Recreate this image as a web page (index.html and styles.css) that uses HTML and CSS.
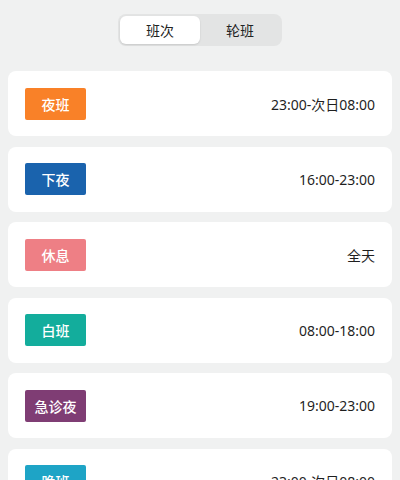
FILE: index.html
```html
<!DOCTYPE html>
<html lang="zh-CN">
<head>
    <meta charset="UTF-8">
    <meta name="viewport" content="width=device-width, initial-scale=1.0">
    <title>班次</title>
    <link rel="stylesheet" href="styles.css">
</head>
<body>
    <div class="page">
        <div class="tabs">
            <div class="tab active">班次</div>
            <div class="tab">轮班</div>
        </div>

        <div class="shift-list">
            <div class="shift-item">
                <span class="tag tag-orange">夜班</span>
                <span class="shift-time">23:00-次日08:00</span>
            </div>
            <div class="shift-item">
                <span class="tag tag-blue">下夜</span>
                <span class="shift-time">16:00-23:00</span>
            </div>
            <div class="shift-item">
                <span class="tag tag-pink">休息</span>
                <span class="shift-time">全天</span>
            </div>
            <div class="shift-item">
                <span class="tag tag-teal">白班</span>
                <span class="shift-time">08:00-18:00</span>
            </div>
            <div class="shift-item">
                <span class="tag tag-purple">急诊夜</span>
                <span class="shift-time">19:00-23:00</span>
            </div>
            <div class="shift-item">
                <span class="tag tag-cyan">晚班</span>
                <span class="shift-time">23:00-次日08:00</span>
            </div>
        </div>
    </div>
</body>
</html>
```

FILE: styles.css
```css
:root {
    --bg: #f0f1f1;
    --card: #ffffff;
    --text: #1f1f1f;
    --tab-bg: #e3e4e4;
}

* {
    margin: 0;
    padding: 0;
    box-sizing: border-box;
    font-family: "Noto Sans", "Noto Sans CJK SC", sans-serif;
}

body {
    background-color: var(--bg);
    color: var(--text);
    overflow: hidden;
}

.page {
    padding: 14px 8px 0;
}

.tabs {
    display: flex;
    width: 164px;
    height: 32px;
    margin: 0 auto 25px;
    padding: 2px;
    background: var(--tab-bg);
    border-radius: 8px;
}

.tab {
    flex: 1;
    display: flex;
    align-items: center;
    justify-content: center;
    font-size: 14px;
    color: #222;
    border-radius: 6px;
}

.tab.active {
    background: var(--card);
    box-shadow: 0 1px 2px rgba(0, 0, 0, 0.12);
}

.shift-list {
    display: flex;
    flex-direction: column;
    gap: 10.5px;
}

.shift-item {
    display: flex;
    align-items: center;
    justify-content: space-between;
    height: 65px;
    padding: 0 17px;
    background: var(--card);
    border-radius: 8px;
}

.tag {
    display: flex;
    align-items: center;
    justify-content: center;
    width: 61px;
    height: 32px;
    border-radius: 2px;
    color: #fff;
    font-size: 14px;
    font-weight: 500;
}

.shift-time {
    font-size: 14px;
    color: var(--text);
}

.tag-orange { background: #f98128; }
.tag-blue { background: #1a63ad; }
.tag-pink { background: #ee7f85; }
.tag-teal { background: #13ad9c; }
.tag-purple { background: #7f3d74; }
.tag-cyan { background: #1ea4c6; }
```
